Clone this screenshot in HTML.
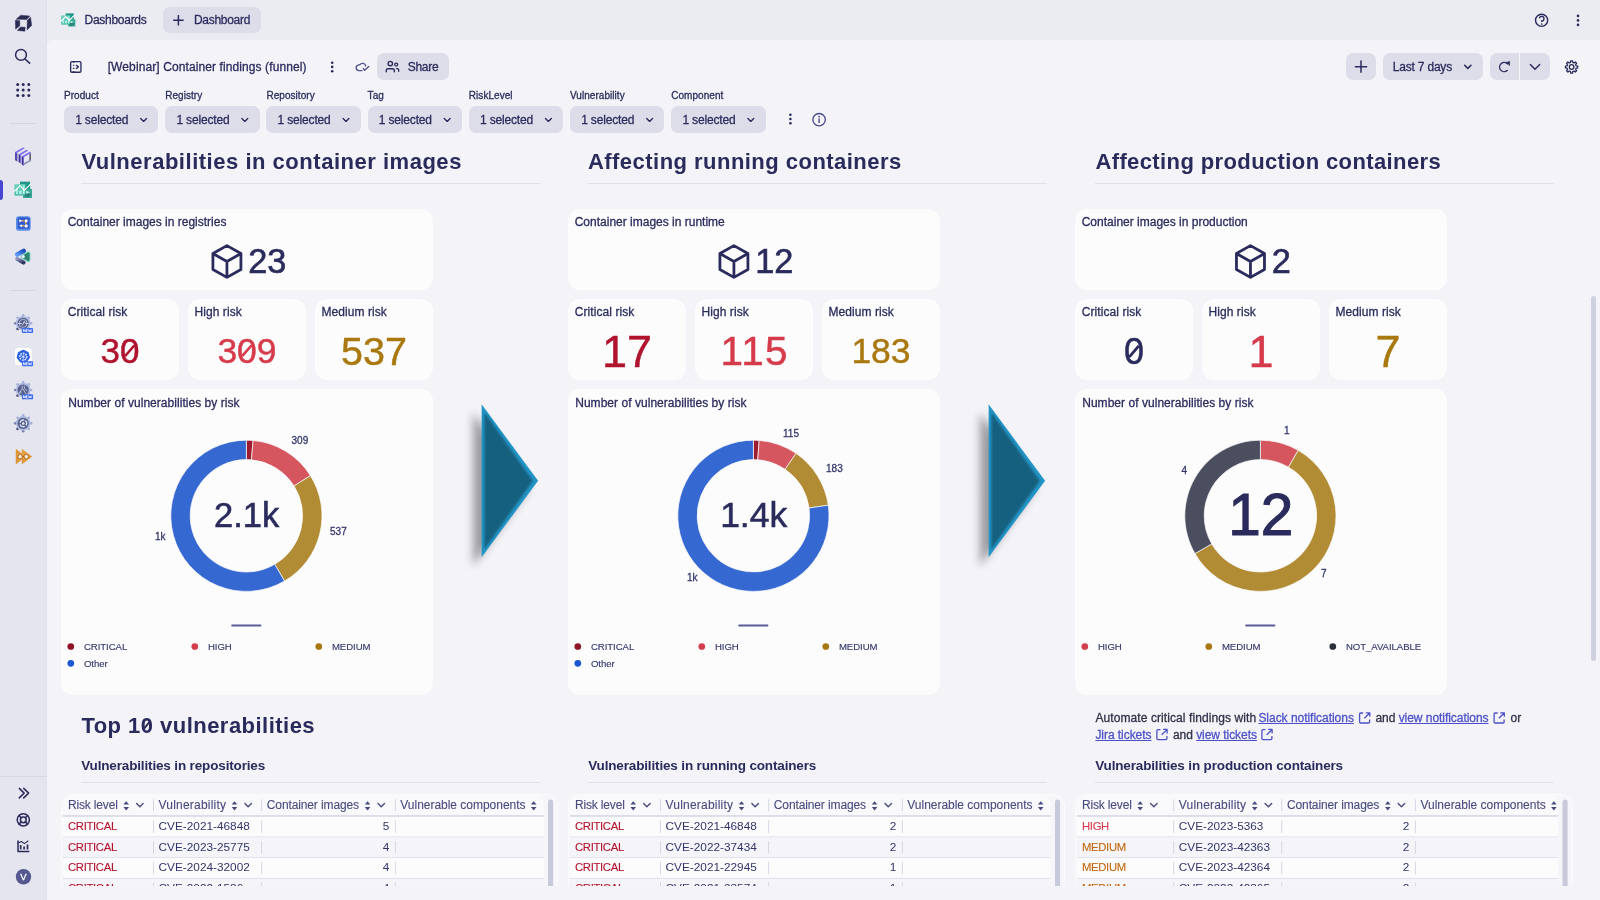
<!DOCTYPE html>
<html lang="en">
<head>
<meta charset="utf-8">
<title>Dashboards</title>
<style>
*{box-sizing:border-box;margin:0;padding:0}
html,body{width:1600px;height:900px;overflow:hidden}
body{font-family:"Liberation Sans",sans-serif;color:#2a2b5c;background:#f3f3f8;position:relative;font-size:12px}
.abs{position:absolute}
.t{position:absolute;white-space:nowrap;line-height:1;-webkit-text-stroke:0.28px currentColor}
#side{position:absolute;left:0;top:0;width:47px;height:900px;background:#e4e5ef;border-right:1px solid #dfe0ea}
#top{position:absolute;left:47px;top:0;width:1553px;height:47px;background:#ebecf2}
#main{position:absolute;left:47px;top:40px;width:1553px;height:860px;background:#f3f3f8;border-top-left-radius:5px}
.btn{position:absolute;background:#dcdde9;border-radius:7px}
.card{position:absolute;background:#fcfcfd;border-radius:12px}
.hr{position:absolute;height:1px;background:#dfe0ea}
svg{position:absolute;overflow:visible}
</style>
</head>
<body>
<div id="wrap" style="position:absolute;left:0;top:0;width:1600px;height:900px;overflow:hidden;will-change:transform">
<div id="side"></div>
<div id="top"></div>
<div id="main"></div>
<div class="abs" style="left:10px;top:123px;width:26px;height:1px;background:#d3d5e3"></div>
<div class="abs" style="left:10px;top:290px;width:26px;height:1px;background:#d3d5e3"></div>
<div class="abs" style="left:0px;top:776px;width:47px;height:1px;background:#d6d8e5"></div>
<div class="abs" style="left:0px;top:180px;width:3px;height:20px;background:#4646d2;border-radius:0 3px 3px 0"></div>
<svg style="left:10px;top:10px" width="28" height="28" viewBox="0 0 900 900"><g fill="#2a2b52" stroke="#2a2b52" stroke-width="14" stroke-linejoin="round"><path d="M345 165 L635 192 L535 305 L195 300 Z"/><path d="M662 232 L697 498 L545 645 L558 322 Z"/><path d="M170 332 L315 342 L315 505 L180 615 Z"/><path d="M335 545 L488 552 L478 685 L235 658 Z"/></g></svg>
<svg style="left:0px;top:0px" width="47" height="110" viewBox="0 0 47 110"><circle cx="21" cy="54.9" r="5.4" fill="none" stroke="#2a2b5c" stroke-width="1.5"/><path d="M25 59 L29.6 63.2" stroke="#2a2b5c" stroke-width="1.6" stroke-linecap="round"/><circle cx="17.7" cy="84.6" r="1.5" fill="#2a2b5c"/><circle cx="17.7" cy="90.0" r="1.5" fill="#2a2b5c"/><circle cx="17.7" cy="95.4" r="1.5" fill="#2a2b5c"/><circle cx="23.2" cy="84.6" r="1.5" fill="#2a2b5c"/><circle cx="23.2" cy="90.0" r="1.5" fill="#2a2b5c"/><circle cx="23.2" cy="95.4" r="1.5" fill="#2a2b5c"/><circle cx="28.8" cy="84.6" r="1.5" fill="#2a2b5c"/><circle cx="28.8" cy="90.0" r="1.5" fill="#2a2b5c"/><circle cx="28.8" cy="95.4" r="1.5" fill="#2a2b5c"/></svg>
<svg style="left:8px;top:142px" width="30" height="30" viewBox="0 0 900 900"><path d="M265 330 L325 365 L325 610 L265 580Z M375 395 L420 425 L420 685 L375 640Z" fill="#aaa5d9"/>
<path d="M215 300 L450 165 L500 190 L265 330Z M325 365 L555 235 L600 260 L375 395Z M420 425 L650 290 L695 320 L470 455Z" fill="#7c69f6"/>
<path d="M215 300 L265 330 L265 580 L215 550Z M325 365 L375 395 L375 640 L325 610Z M420 425 L470 455 L470 715 L420 685Z" fill="#3b2e9e"/>
<path d="M640 358 L690 330 L690 570 L640 545Z" fill="#5d6079"/><path d="M470 640 L640 545 L690 570 L470 700Z" fill="#8a93b5"/></svg>
<svg style="left:8px;top:175px" width="30" height="30" viewBox="0 0 900 900"><defs><linearGradient id="gd1" x1="0" y1="0" x2="0" y2="1"><stop offset="0" stop-color="#6fd2c2"/><stop offset="1" stop-color="#52bdab"/></linearGradient></defs>
<rect x="360" y="200" width="305" height="240" fill="#1f9787"/>
<rect x="450" y="420" width="270" height="270" fill="#37a898"/>
<rect x="190" y="275" width="330" height="345" fill="url(#gd1)"/>
<g fill="#aef1e5"><rect x="240" y="400" width="55" height="170"/><rect x="335" y="470" width="75" height="100"/><rect x="445" y="310" width="55" height="260"/></g>
<path d="M545 470 L660 520 L545 560Z" fill="#c8f5ec"/><path d="M480 600 A110 110 0 0 0 690 560 L545 560Z" fill="#2b8577"/>
<path d="M185 500 L360 322 L490 462 L692 262" fill="none" stroke="#ffffff" stroke-width="32"/></svg>
<svg style="left:8px;top:208px" width="30" height="30" viewBox="0 0 900 900"><rect x="240" y="245" width="440" height="440" rx="85" fill="#5b8ee9"/><rect x="290" y="285" width="355" height="340" rx="50" fill="#3157c9"/>
<g fill="#e0a040"><rect x="425" y="365" width="70" height="40"/><rect x="510" y="420" width="40" height="70"/><rect x="420" y="510" width="70" height="40"/></g>
<g fill="#f4f7ff"><path d="M340 335 L435 385 L340 435Z"/><circle cx="545" cy="385" r="48"/><path d="M330 532 L425 485 L425 580Z"/><circle cx="545" cy="540" r="52"/></g></svg>
<svg style="left:8px;top:241px" width="30" height="30" viewBox="0 0 900 900"><defs><linearGradient id="g4a" x1="0" y1="1" x2="1" y2="0"><stop offset="0" stop-color="#5b95f5"/><stop offset="1" stop-color="#1d4fc0"/></linearGradient>
<linearGradient id="g4b" x1="0" y1="0" x2="1" y2="1"><stop offset="0" stop-color="#8b96bd"/><stop offset="1" stop-color="#2e3360"/></linearGradient></defs>
<path d="M278 405 L470 298" stroke="url(#g4a)" stroke-width="135" stroke-linecap="round"/>
<path d="M278 540 L465 645" stroke="url(#g4b)" stroke-width="125" stroke-linecap="round"/>
<path d="M445 470 L610 380 L610 565 Z" fill="#6fcfb9" stroke="#6fcfb9" stroke-width="125" stroke-linejoin="round"/>
<path d="M445 470 L610 380 L610 565 Z" fill="#2f8272" stroke="#2f8272" stroke-width="70" stroke-linejoin="round"/>
<circle cx="458" cy="466" r="47" fill="#eef0ff"/></svg>
<svg style="left:8px;top:308px" width="30" height="30" viewBox="0 0 900 900"><circle cx="455" cy="222" r="40" fill="#a7b2dc"/><circle cx="623" cy="292" r="40" fill="#a7b2dc"/><circle cx="693" cy="460" r="40" fill="#a7b2dc"/><circle cx="623" cy="628" r="40" fill="#a7b2dc"/><circle cx="455" cy="698" r="40" fill="#7580ad"/><circle cx="287" cy="628" r="40" fill="#4a5078"/><circle cx="217" cy="460" r="40" fill="#7580ad"/><circle cx="287" cy="292" r="40" fill="#a7b2dc"/><circle cx="455" cy="460" r="218" fill="#aeb9e0"/><circle cx="455" cy="460" r="168" fill="#57618b"/><circle cx="455" cy="460" r="120" fill="none" stroke="#c5cdea" stroke-width="22"/>
<path d="M300 465 L400 465 L440 505 L490 400 L530 470 L610 465" fill="none" stroke="#dfe5f8" stroke-width="26" stroke-linejoin="round"/><rect x="420" y="600" width="332" height="150" rx="26" fill="#3f6cf1"/>
<path d="M465 712 V642 L515 712 V642 M585 642 H545 V712 H585 M545 677 H580 M615 642 L635 712 L660 655 L685 712 L708 642" fill="none" stroke="#ffffff" stroke-width="22" stroke-linejoin="round"/></svg>
<svg style="left:8px;top:342px" width="30" height="30" viewBox="0 0 900 900"><rect x="205" y="180" width="510" height="520" rx="110" fill="#ffffff"/>
<path d="M460 240 L610 312 L648 475 L545 605 L375 605 L272 475 L310 312Z" fill="#2a5ee0" stroke="#2a5ee0" stroke-width="24" stroke-linejoin="round"/>
<circle cx="460" cy="440" r="105" fill="none" stroke="#e4ebff" stroke-width="42" stroke-dasharray="50 28"/>
<circle cx="460" cy="440" r="28" fill="#e4ebff"/><path d="M460 320 L460 560 M355 380 L565 500 M355 500 L565 380" stroke="#e4ebff" stroke-width="16"/><rect x="420" y="575" width="332" height="150" rx="26" fill="#3f6cf1"/>
<path d="M465 687 V617 L515 687 V617 M585 617 H545 V687 H585 M545 652 H580 M615 617 L635 687 L660 630 L685 687 L708 617" fill="none" stroke="#ffffff" stroke-width="22" stroke-linejoin="round"/></svg>
<svg style="left:8px;top:375px" width="30" height="30" viewBox="0 0 900 900"><circle cx="455" cy="212" r="40" fill="#a7b2dc"/><circle cx="623" cy="282" r="40" fill="#a7b2dc"/><circle cx="693" cy="450" r="40" fill="#a7b2dc"/><circle cx="623" cy="618" r="40" fill="#a7b2dc"/><circle cx="455" cy="688" r="40" fill="#7580ad"/><circle cx="287" cy="618" r="40" fill="#4a5078"/><circle cx="217" cy="450" r="40" fill="#7580ad"/><circle cx="287" cy="282" r="40" fill="#a7b2dc"/><circle cx="455" cy="450" r="218" fill="#aeb9e0"/><circle cx="455" cy="450" r="168" fill="#57618b"/><path d="M425 330 L425 420 L345 540 M490 330 L490 400 L565 470 M450 420 L535 560" fill="none" stroke="#c5cdea" stroke-width="26" stroke-linecap="round" stroke-linejoin="round"/>
<circle cx="372" cy="522" r="30" fill="none" stroke="#c5cdea" stroke-width="18"/><rect x="420" y="578" width="332" height="150" rx="26" fill="#3f6cf1"/>
<path d="M465 690 V620 L515 690 V620 M585 620 H545 V690 H585 M545 655 H580 M615 620 L635 690 L660 633 L685 690 L708 620" fill="none" stroke="#ffffff" stroke-width="22" stroke-linejoin="round"/></svg>
<svg style="left:8px;top:408px" width="30" height="30" viewBox="0 0 900 900"><circle cx="455" cy="222" r="40" fill="#a7b2dc"/><circle cx="623" cy="292" r="40" fill="#a7b2dc"/><circle cx="693" cy="460" r="40" fill="#a7b2dc"/><circle cx="623" cy="628" r="40" fill="#a7b2dc"/><circle cx="455" cy="698" r="40" fill="#7580ad"/><circle cx="287" cy="628" r="40" fill="#4a5078"/><circle cx="217" cy="460" r="40" fill="#7580ad"/><circle cx="287" cy="292" r="40" fill="#a7b2dc"/><circle cx="455" cy="460" r="218" fill="#aeb9e0"/><circle cx="455" cy="460" r="168" fill="#57618b"/><circle cx="458" cy="462" r="100" fill="none" stroke="#dfe5f8" stroke-width="40" stroke-dasharray="165 45" transform="rotate(-60 458 462)"/><circle cx="458" cy="462" r="38" fill="#eef1ff"/></svg>
<svg style="left:8px;top:442px" width="30" height="30" viewBox="0 0 900 900"><defs><linearGradient id="g9" x1="0" y1="0" x2="1" y2="1"><stop offset="0" stop-color="#e9a441"/><stop offset="1" stop-color="#d38a25"/></linearGradient></defs>
<path d="M240 215 L530 437 L240 660Z" fill="#dc9535" stroke="#dc9535" stroke-width="14" stroke-linejoin="round"/>
<path d="M420 215 L715 437 L420 660Z" fill="url(#g9)" stroke="#e29c3a" stroke-width="14" stroke-linejoin="round"/>
<circle cx="365" cy="440" r="62" fill="#f6f1dc" stroke="#9a4f1c" stroke-width="18"/><circle cx="548" cy="437" r="62" fill="#f6f1dc" stroke="#9a4f1c" stroke-width="18"/><rect x="425" y="418" width="60" height="36" fill="#b5601f"/></svg>
<svg style="left:0px;top:780px" width="47" height="120" viewBox="0 0 47 120"><g fill="none" stroke="#2a2b5c" stroke-width="1.5" stroke-linecap="round" stroke-linejoin="round">
<path d="M19.3 8.4 L24.1 13.1 L19.3 17.9 M23.7 8.4 L28.6 13.1 L23.7 17.9"/>
<circle cx="23.3" cy="39.8" r="6.1"/><circle cx="23.3" cy="39.8" r="2.9"/>
<path d="M19 35.5 L21.2 37.7 M27.6 35.5 L25.4 37.7 M19 44.1 L21.2 41.9 M27.6 44.1 L25.4 41.9"/>
<path d="M18 61 L18 71.6 L28.8 71.6"/><path d="M18.2 63 L21.3 61.5 L24.4 63.6 L28 61" stroke-width="1.1"/></g>
<path d="M20.7 65 V69.5 M24.1 66.4 V69.5 M27.5 64.6 V69.5" stroke="#2a2b5c" stroke-width="1.7" fill="none"/>
<circle cx="23.5" cy="96.8" r="7.7" fill="#55588f"/></svg>
<div class="t" style="left:-176.50px;width:400px;text-align:center;top:872px;font-size:9.5px;color:#ffffff;">V</div>
<svg style="left:56.3px;top:7.7px" width="24.2" height="24.2" viewBox="0 0 900 900"><defs><linearGradient id="gd1b" x1="0" y1="0" x2="0" y2="1"><stop offset="0" stop-color="#6fd2c2"/><stop offset="1" stop-color="#52bdab"/></linearGradient></defs>
<rect x="360" y="200" width="305" height="240" fill="#1f9787"/>
<rect x="450" y="420" width="270" height="270" fill="#37a898"/>
<rect x="190" y="275" width="330" height="345" fill="url(#gd1b)"/>
<g fill="#aef1e5"><rect x="240" y="400" width="55" height="170"/><rect x="335" y="470" width="75" height="100"/><rect x="445" y="310" width="55" height="260"/></g>
<path d="M545 470 L660 520 L545 560Z" fill="#c8f5ec"/><path d="M480 600 A110 110 0 0 0 690 560 L545 560Z" fill="#2b8577"/>
<path d="M185 500 L360 322 L490 462 L692 262" fill="none" stroke="#ffffff" stroke-width="42"/></svg>
<div class="t" style="left:84.50px;top:14px;font-size:12px;letter-spacing:-0.27px;">Dashboards</div>
<div class="btn" style="left:163px;top:7px;width:98px;height:26px;border-radius:7px"></div>
<div class="t" style="left:194.00px;top:14px;font-size:12px;letter-spacing:-0.3px;">Dashboard</div>
<svg style="left:0px;top:0px" width="1600" height="40" viewBox="0 0 1600 40"><path d="M173.2 20.2 H183.6 M178.4 15 V25.4" stroke="#2a2b5c" stroke-width="1.5" fill="none"/>
<circle cx="1541.6" cy="20.3" r="6.1" fill="none" stroke="#2a2b5c" stroke-width="1.4"/>
<path d="M1539.4 18.4 A2.3 2.3 0 1 1 1541.7 20.9 V22.1" fill="none" stroke="#2a2b5c" stroke-width="1.3"/><circle cx="1541.7" cy="24" r="0.85" fill="#2a2b5c"/>
<circle cx="1578" cy="15.9" r="1.3" fill="#2a2b5c"/><circle cx="1578" cy="20.4" r="1.3" fill="#2a2b5c"/><circle cx="1578" cy="24.9" r="1.3" fill="#2a2b5c"/></svg>
<div class="t" style="left:107.70px;top:61px;font-size:12px;letter-spacing:0.1px;">[Webinar] Container findings (funnel)</div>
<div class="btn" style="left:377px;top:53px;width:71.5px;height:26.7px;"></div>
<div class="t" style="left:407.80px;top:61px;font-size:12px;letter-spacing:-0.3px;">Share</div>
<div class="btn" style="left:1346px;top:53px;width:30px;height:26.7px;"></div>
<div class="btn" style="left:1383px;top:53px;width:100px;height:26.7px;"></div>
<div class="t" style="left:1392.80px;top:61px;font-size:12px;letter-spacing:-0.2px;">Last 7 days</div>
<div class="btn" style="left:1489.5px;top:53px;width:29.7px;height:26.7px;border-radius:7px 0 0 7px"></div>
<div class="btn" style="left:1520.2px;top:53px;width:29.8px;height:26.7px;border-radius:0 7px 7px 0"></div>
<svg style="left:0px;top:40px" width="1600" height="60" viewBox="0 0 1600 60"><g fill="none" stroke="#2a2b5c" stroke-width="1.4" stroke-linecap="round" stroke-linejoin="round" transform="translate(0,-40)">
<rect x="70.65" y="61.65" width="10.3" height="10.55" rx="1.2" stroke-width="1.35"/><path d="M73.65 61.6 V72.2" stroke-dasharray="1.1 2" stroke-linecap="butt" stroke-width="1.5"/><path d="M76.4 65.3 L78.4 66.9 L76.4 68.5" stroke-width="1.35"/>
<g stroke="#4f5190" stroke-width="1.35"><path d="M362 70.55 H358.8 A2.75 2.75 0 0 1 358.2 65.15 Q359 64.55 359.9 64.7 A3.3 3.3 0 0 1 365.7 65.8"/><path d="M363.3 68.5 L364.7 70.3 L368.7 66.5"/></g>
<circle cx="390.3" cy="63.6" r="2.2"/><path d="M386.3 71.8 V70.3 A1.6 1.6 0 0 1 387.9 68.7 H392.7 A1.6 1.6 0 0 1 394.3 70.3 V71.8"/>
<circle cx="396.2" cy="64.6" r="1.5" stroke-width="1.3"/><path d="M396.6 68.7 H397.3 A1.4 1.4 0 0 1 398.7 70.1 V71.3" stroke-width="1.3"/>
<path d="M1355.4 66.7 H1366.6 M1361 61.1 V72.3" stroke-width="1.5"/>
<path d="M1464.6 65.2 L1467.8 68.4 L1471 65.2" stroke-width="1.5"/>
<path d="M1507.45 63.75 A4.6 4.6 0 1 0 1507.2 70.5" stroke-width="1.4"/><path d="M1506.2 62.4 L1509.6 61.4 V65.2Z" fill="#2a2b5c" stroke-width="0.6"/>
<path d="M1530.4 64.6 L1535 69.2 L1539.7 64.6" stroke-width="1.4"/>
</g></svg>
<svg style="left:0px;top:0px" width="1600" height="100" viewBox="0 0 1600 100"><path d="M1570.50 62.43 L1570.68 60.87 L1572.52 60.87 L1572.70 62.43 L1574.06 62.99 L1575.28 62.01 L1576.59 63.32 L1575.61 64.54 L1576.17 65.90 L1577.73 66.08 L1577.73 67.92 L1576.17 68.10 L1575.61 69.46 L1576.59 70.68 L1575.28 71.99 L1574.06 71.01 L1572.70 71.57 L1572.52 73.13 L1570.68 73.13 L1570.50 71.57 L1569.14 71.01 L1567.92 71.99 L1566.61 70.68 L1567.59 69.46 L1567.03 68.10 L1565.47 67.92 L1565.47 66.08 L1567.03 65.90 L1567.59 64.54 L1566.61 63.32 L1567.92 62.01 L1569.14 62.99Z" fill="none" stroke="#2a2b5c" stroke-width="1.3" stroke-linejoin="round"/><circle cx="1571.6" cy="67" r="2.3" fill="none" stroke="#2a2b5c" stroke-width="1.3"/></svg>
<svg style="left:0px;top:0px" width="1600" height="100" viewBox="0 0 1600 100"><circle cx="332.2" cy="62.7" r="1.3" fill="#2a2b5c"/><circle cx="332.2" cy="66.9" r="1.3" fill="#2a2b5c"/><circle cx="332.2" cy="71.2" r="1.3" fill="#2a2b5c"/></svg>
<div class="t" style="left:64.00px;top:91px;font-size:10px;letter-spacing:0.05px;">Product</div>
<div class="btn" style="left:64.0px;top:106px;width:94.4px;height:26.5px;"></div>
<div class="t" style="left:75.20px;top:114px;font-size:12px;letter-spacing:-0.17px;">1 selected</div>
<div class="t" style="left:165.20px;top:91px;font-size:10px;letter-spacing:0.05px;">Registry</div>
<div class="btn" style="left:165.2px;top:106px;width:94.4px;height:26.5px;"></div>
<div class="t" style="left:176.40px;top:114px;font-size:12px;letter-spacing:-0.17px;">1 selected</div>
<div class="t" style="left:266.40px;top:91px;font-size:10px;letter-spacing:0.05px;">Repository</div>
<div class="btn" style="left:266.4px;top:106px;width:94.4px;height:26.5px;"></div>
<div class="t" style="left:277.60px;top:114px;font-size:12px;letter-spacing:-0.17px;">1 selected</div>
<div class="t" style="left:367.60px;top:91px;font-size:10px;letter-spacing:0.05px;">Tag</div>
<div class="btn" style="left:367.6px;top:106px;width:94.4px;height:26.5px;"></div>
<div class="t" style="left:378.80px;top:114px;font-size:12px;letter-spacing:-0.17px;">1 selected</div>
<div class="t" style="left:468.80px;top:91px;font-size:10px;letter-spacing:0.05px;">RiskLevel</div>
<div class="btn" style="left:468.8px;top:106px;width:94.4px;height:26.5px;"></div>
<div class="t" style="left:480.00px;top:114px;font-size:12px;letter-spacing:-0.17px;">1 selected</div>
<div class="t" style="left:570.00px;top:91px;font-size:10px;letter-spacing:0.05px;">Vulnerability</div>
<div class="btn" style="left:570.0px;top:106px;width:94.4px;height:26.5px;"></div>
<div class="t" style="left:581.20px;top:114px;font-size:12px;letter-spacing:-0.17px;">1 selected</div>
<div class="t" style="left:671.20px;top:91px;font-size:10px;letter-spacing:0.05px;">Component</div>
<div class="btn" style="left:671.2px;top:106px;width:94.4px;height:26.5px;"></div>
<div class="t" style="left:682.40px;top:114px;font-size:12px;letter-spacing:-0.17px;">1 selected</div>
<svg style="left:0px;top:0px" width="1600" height="140" viewBox="0 0 1600 140"><g fill="none" stroke="#2a2b5c" stroke-width="1.35" stroke-linecap="round" stroke-linejoin="round"><path d="M140.7 118.5 L143.6 121.4 L146.5 118.5"/><path d="M241.9 118.5 L244.8 121.4 L247.7 118.5"/><path d="M343.1 118.5 L346.0 121.4 L348.9 118.5"/><path d="M444.3 118.5 L447.2 121.4 L450.1 118.5"/><path d="M545.5 118.5 L548.4 121.4 L551.3 118.5"/><path d="M646.7 118.5 L649.6 121.4 L652.5 118.5"/><path d="M747.9 118.5 L750.8 121.4 L753.7 118.5"/></g><circle cx="790.4" cy="114.8" r="1.3" fill="#2a2b5c"/><circle cx="790.4" cy="119.0" r="1.3" fill="#2a2b5c"/><circle cx="790.4" cy="123.2" r="1.3" fill="#2a2b5c"/><circle cx="819.1" cy="119.7" r="6.2" fill="none" stroke="#47498a" stroke-width="1.3"/><path d="M819.1 118.6 V122.9" stroke="#47498a" stroke-width="1.4"/><circle cx="819.1" cy="116.6" r="0.9" fill="#47498a"/></svg>
<div class="t" style="left:81.40px;top:151px;font-size:22px;font-weight:bold;letter-spacing:0.52px;-webkit-text-stroke:0;">Vulnerabilities in container images</div>
<div class="hr" style="left:81.0px;top:183px;width:459px;height:1px;"></div>
<div class="t" style="left:587.90px;top:151px;font-size:22px;font-weight:bold;letter-spacing:0.47px;-webkit-text-stroke:0;">Affecting running containers</div>
<div class="hr" style="left:588.0px;top:183px;width:459px;height:1px;"></div>
<div class="t" style="left:1095.40px;top:151px;font-size:22px;font-weight:bold;letter-spacing:0.39px;-webkit-text-stroke:0;">Affecting production containers</div>
<div class="hr" style="left:1095.0px;top:183px;width:459px;height:1px;"></div>
<div class="card" style="left:61px;top:209px;width:372px;height:81px;"></div>
<div class="t" style="left:67.70px;top:216px;font-size:12px;">Container images in registries</div>
<div class="card" style="left:61px;top:299px;width:118px;height:81px;"></div>
<div class="card" style="left:188px;top:299px;width:118px;height:81px;"></div>
<div class="card" style="left:315px;top:299px;width:118px;height:81px;"></div>
<div class="t" style="left:67.70px;top:306px;font-size:12px;letter-spacing:0.08px;">Critical risk</div>
<div class="t" style="left:-80.00px;width:400px;text-align:center;top:333px;font-size:35px;color:#b0132d;-webkit-text-stroke:0.45px #b0132d;">30</div>
<svg style="left:0px;top:0px" width="1600" height="900" viewBox="0 0 1600 900"><path d="M125.18 356.00 L134.28 345.50" stroke="#b0132d" stroke-width="2.62"/></svg>
<div class="t" style="left:194.40px;top:306px;font-size:12px;letter-spacing:0.08px;">High risk</div>
<div class="t" style="left:47.00px;width:400px;text-align:center;top:334px;font-size:35.5px;color:#d63b4b;-webkit-text-stroke:0.45px #d63b4b;">309</div>
<svg style="left:0px;top:0px" width="1600" height="900" viewBox="0 0 1600 900"><path d="M242.38 355.90 L251.62 345.25" stroke="#d63b4b" stroke-width="2.66"/></svg>
<div class="t" style="left:321.40px;top:306px;font-size:12px;letter-spacing:0.08px;">Medium risk</div>
<div class="t" style="left:174.00px;width:400px;text-align:center;top:332px;font-size:39.5px;color:#a9780f;-webkit-text-stroke:0.45px #a9780f;">537</div>
<div class="card" style="left:61px;top:389px;width:372px;height:306px;"></div>
<div class="t" style="left:68.20px;top:397px;font-size:12px;letter-spacing:0.04px;">Number of vulnerabilities by risk</div>
<svg style="left:0px;top:0px" width="1600" height="900" viewBox="0 0 1600 900"><path d="M226.92 245.60 L240.92 253.55 L240.92 269.45 L226.92 277.40 L212.92 269.45 L212.92 253.55Z M212.92 253.55 L226.92 261.50 L240.92 253.55 M226.92 261.50 V277.40" fill="none" stroke="#2a2b5c" stroke-width="2.8" stroke-linejoin="round"/></svg>
<div class="t" style="left:248.22px;top:244px;font-size:34.3px;-webkit-text-stroke:0.6px #2a2b5c;">23</div>
<svg style="left:0px;top:0px" width="1600" height="900" viewBox="0 0 1600 900"><path d="M246.40 440.20 A75.6 75.6 0 0 1 253.12 440.50 L251.40 459.82 A56.2 56.2 0 0 0 246.40 459.60Z" fill="#9e1c30" stroke="#fcfcfd" stroke-width="0.7"/><path d="M253.12 440.50 A75.6 75.6 0 0 1 310.44 475.63 L294.01 485.94 A56.2 56.2 0 0 0 251.40 459.82Z" fill="#d5565f" stroke="#fcfcfd" stroke-width="0.7"/><path d="M310.44 475.63 A75.6 75.6 0 0 1 284.54 581.07 L274.75 564.32 A56.2 56.2 0 0 0 294.01 485.94Z" fill="#b28c34" stroke="#fcfcfd" stroke-width="0.7"/><path d="M284.54 581.07 A75.6 75.6 0 1 1 246.40 440.20 L246.40 459.60 A56.2 56.2 0 1 0 274.75 564.32Z" fill="#3668d1" stroke="#fcfcfd" stroke-width="0.7"/><rect x="231.2" y="624.6" width="30.2" height="1.8" rx="0.9" fill="#5a5c98"/><circle cx="70.8" cy="646.5" r="3.35" fill="#8f1426"/><circle cx="194.8" cy="646.5" r="3.35" fill="#d33e4c"/><circle cx="318.8" cy="646.5" r="3.35" fill="#a8770f"/><circle cx="70.8" cy="663.3" r="3.35" fill="#1b57d1"/></svg>
<div class="t" style="left:83.90px;top:642px;font-size:9.6px;color:#33356a;letter-spacing:-0.05px;-webkit-text-stroke:0.12px #33356a;">CRITICAL</div>
<div class="t" style="left:207.90px;top:642px;font-size:9.6px;color:#33356a;letter-spacing:-0.05px;-webkit-text-stroke:0.12px #33356a;">HIGH</div>
<div class="t" style="left:331.90px;top:642px;font-size:9.6px;color:#33356a;letter-spacing:-0.05px;-webkit-text-stroke:0.12px #33356a;">MEDIUM</div>
<div class="t" style="left:83.90px;top:659px;font-size:9.6px;color:#33356a;letter-spacing:-0.05px;-webkit-text-stroke:0.12px #33356a;">Other</div>
<div class="t" style="left:291.50px;top:436px;font-size:10px;color:#33356a;letter-spacing:0.05px;">309</div>
<div class="t" style="left:330.00px;top:527px;font-size:10px;color:#33356a;letter-spacing:0.05px;">537</div>
<div class="t" style="left:155.00px;top:532px;font-size:10px;color:#33356a;letter-spacing:0.05px;">1k</div>
<div class="t" style="left:46.70px;width:400px;text-align:center;top:498px;font-size:34.5px;-webkit-text-stroke:0.55px #2a2b5c;">2.1k</div>
<div class="card" style="left:568px;top:209px;width:372px;height:81px;"></div>
<div class="t" style="left:574.70px;top:216px;font-size:12px;">Container images in runtime</div>
<div class="card" style="left:568px;top:299px;width:118px;height:81px;"></div>
<div class="card" style="left:695px;top:299px;width:118px;height:81px;"></div>
<div class="card" style="left:822px;top:299px;width:118px;height:81px;"></div>
<div class="t" style="left:574.70px;top:306px;font-size:12px;letter-spacing:0.08px;">Critical risk</div>
<div class="t" style="left:427.00px;width:400px;text-align:center;top:329px;font-size:45px;color:#b0132d;-webkit-text-stroke:0.45px #b0132d;">17</div>
<div class="t" style="left:701.40px;top:306px;font-size:12px;letter-spacing:0.08px;">High risk</div>
<div class="t" style="left:554.65px;width:400px;text-align:center;top:331px;font-size:40.5px;color:#d63b4b;letter-spacing:1.3px;-webkit-text-stroke:0.45px #d63b4b;">115</div>
<div class="t" style="left:828.40px;top:306px;font-size:12px;letter-spacing:0.08px;">Medium risk</div>
<div class="t" style="left:681.00px;width:400px;text-align:center;top:334px;font-size:35.5px;color:#a9780f;-webkit-text-stroke:0.45px #a9780f;">183</div>
<div class="card" style="left:568px;top:389px;width:372px;height:306px;"></div>
<div class="t" style="left:575.20px;top:397px;font-size:12px;letter-spacing:0.04px;">Number of vulnerabilities by risk</div>
<svg style="left:0px;top:0px" width="1600" height="900" viewBox="0 0 1600 900"><path d="M733.92 245.60 L747.92 253.55 L747.92 269.45 L733.92 277.40 L719.92 269.45 L719.92 253.55Z M719.92 253.55 L733.92 261.50 L747.92 253.55 M733.92 261.50 V277.40" fill="none" stroke="#2a2b5c" stroke-width="2.8" stroke-linejoin="round"/></svg>
<div class="t" style="left:755.22px;top:244px;font-size:34.3px;-webkit-text-stroke:0.6px #2a2b5c;">12</div>
<svg style="left:0px;top:0px" width="1600" height="900" viewBox="0 0 1600 900"><path d="M753.40 440.20 A75.6 75.6 0 0 1 759.20 440.42 L757.71 459.77 A56.2 56.2 0 0 0 753.40 459.60Z" fill="#9e1c30" stroke="#fcfcfd" stroke-width="0.7"/><path d="M759.20 440.42 A75.6 75.6 0 0 1 796.00 453.35 L785.07 469.37 A56.2 56.2 0 0 0 757.71 459.77Z" fill="#d5565f" stroke="#fcfcfd" stroke-width="0.7"/><path d="M796.00 453.35 A75.6 75.6 0 0 1 828.26 505.28 L809.05 507.98 A56.2 56.2 0 0 0 785.07 469.37Z" fill="#b28c34" stroke="#fcfcfd" stroke-width="0.7"/><path d="M828.26 505.28 A75.6 75.6 0 1 1 753.40 440.20 L753.40 459.60 A56.2 56.2 0 1 0 809.05 507.98Z" fill="#3668d1" stroke="#fcfcfd" stroke-width="0.7"/><rect x="738.2" y="624.6" width="30.2" height="1.8" rx="0.9" fill="#5a5c98"/><circle cx="577.8" cy="646.5" r="3.35" fill="#8f1426"/><circle cx="701.8" cy="646.5" r="3.35" fill="#d33e4c"/><circle cx="825.8" cy="646.5" r="3.35" fill="#a8770f"/><circle cx="577.8" cy="663.3" r="3.35" fill="#1b57d1"/></svg>
<div class="t" style="left:590.90px;top:642px;font-size:9.6px;color:#33356a;letter-spacing:-0.05px;-webkit-text-stroke:0.12px #33356a;">CRITICAL</div>
<div class="t" style="left:714.90px;top:642px;font-size:9.6px;color:#33356a;letter-spacing:-0.05px;-webkit-text-stroke:0.12px #33356a;">HIGH</div>
<div class="t" style="left:838.90px;top:642px;font-size:9.6px;color:#33356a;letter-spacing:-0.05px;-webkit-text-stroke:0.12px #33356a;">MEDIUM</div>
<div class="t" style="left:590.90px;top:659px;font-size:9.6px;color:#33356a;letter-spacing:-0.05px;-webkit-text-stroke:0.12px #33356a;">Other</div>
<div class="t" style="left:783.00px;top:429px;font-size:10px;color:#33356a;letter-spacing:0.05px;">115</div>
<div class="t" style="left:826.00px;top:464px;font-size:10px;color:#33356a;letter-spacing:0.05px;">183</div>
<div class="t" style="left:687.00px;top:573px;font-size:10px;color:#33356a;letter-spacing:0.05px;">1k</div>
<div class="t" style="left:553.70px;width:400px;text-align:center;top:498px;font-size:35.5px;-webkit-text-stroke:0.55px #2a2b5c;">1.4k</div>
<div class="card" style="left:1075px;top:209px;width:372px;height:81px;"></div>
<div class="t" style="left:1081.70px;top:216px;font-size:12px;">Container images in production</div>
<div class="card" style="left:1075px;top:299px;width:118px;height:81px;"></div>
<div class="card" style="left:1202px;top:299px;width:118px;height:81px;"></div>
<div class="card" style="left:1329px;top:299px;width:118px;height:81px;"></div>
<div class="t" style="left:1081.70px;top:306px;font-size:12px;letter-spacing:0.08px;">Critical risk</div>
<div class="t" style="left:934.00px;width:400px;text-align:center;top:334px;font-size:36px;color:#2a2b5c;-webkit-text-stroke:0.45px #2a2b5c;">0</div>
<svg style="left:0px;top:0px" width="1600" height="900" viewBox="0 0 1600 900"><path d="M1129.32 356.80 L1138.68 346.00" stroke="#2a2b5c" stroke-width="2.70"/></svg>
<div class="t" style="left:1208.40px;top:306px;font-size:12px;letter-spacing:0.08px;">High risk</div>
<div class="t" style="left:1061.00px;width:400px;text-align:center;top:329px;font-size:45px;color:#d63b4b;-webkit-text-stroke:0.45px #d63b4b;">1</div>
<div class="t" style="left:1335.40px;top:306px;font-size:12px;letter-spacing:0.08px;">Medium risk</div>
<div class="t" style="left:1188.00px;width:400px;text-align:center;top:329px;font-size:45px;color:#a9780f;-webkit-text-stroke:0.45px #a9780f;">7</div>
<div class="card" style="left:1075px;top:389px;width:372px;height:306px;"></div>
<div class="t" style="left:1082.20px;top:397px;font-size:12px;letter-spacing:0.04px;">Number of vulnerabilities by risk</div>
<svg style="left:0px;top:0px" width="1600" height="900" viewBox="0 0 1600 900"><path d="M1250.46 245.60 L1264.46 253.55 L1264.46 269.45 L1250.46 277.40 L1236.46 269.45 L1236.46 253.55Z M1236.46 253.55 L1250.46 261.50 L1264.46 253.55 M1250.46 261.50 V277.40" fill="none" stroke="#2a2b5c" stroke-width="2.8" stroke-linejoin="round"/></svg>
<div class="t" style="left:1271.76px;top:244px;font-size:34.3px;-webkit-text-stroke:0.6px #2a2b5c;">2</div>
<svg style="left:0px;top:0px" width="1600" height="900" viewBox="0 0 1600 900"><path d="M1260.40 440.20 A75.6 75.6 0 0 1 1298.20 450.33 L1288.50 467.13 A56.2 56.2 0 0 0 1260.40 459.60Z" fill="#d5565f" stroke="#fcfcfd" stroke-width="0.7"/><path d="M1298.20 450.33 A75.6 75.6 0 1 1 1194.93 553.60 L1211.73 543.90 A56.2 56.2 0 1 0 1288.50 467.13Z" fill="#b28c34" stroke="#fcfcfd" stroke-width="0.7"/><path d="M1194.93 553.60 A75.6 75.6 0 0 1 1260.40 440.20 L1260.40 459.60 A56.2 56.2 0 0 0 1211.73 543.90Z" fill="#4a4e5e" stroke="#fcfcfd" stroke-width="0.7"/><rect x="1245.2" y="624.6" width="30.2" height="1.8" rx="0.9" fill="#5a5c98"/><circle cx="1084.8" cy="646.5" r="3.35" fill="#d33e4c"/><circle cx="1208.8" cy="646.5" r="3.35" fill="#a8770f"/><circle cx="1332.8" cy="646.5" r="3.35" fill="#2b2e3b"/></svg>
<div class="t" style="left:1097.90px;top:642px;font-size:9.6px;color:#33356a;letter-spacing:-0.05px;-webkit-text-stroke:0.12px #33356a;">HIGH</div>
<div class="t" style="left:1221.90px;top:642px;font-size:9.6px;color:#33356a;letter-spacing:-0.05px;-webkit-text-stroke:0.12px #33356a;">MEDIUM</div>
<div class="t" style="left:1345.90px;top:642px;font-size:9.6px;color:#33356a;letter-spacing:-0.05px;-webkit-text-stroke:0.12px #33356a;">NOT_AVAILABLE</div>
<div class="t" style="left:1284.00px;top:426px;font-size:10px;color:#33356a;letter-spacing:0.05px;">1</div>
<div class="t" style="left:1181.50px;top:466px;font-size:10px;color:#33356a;letter-spacing:0.05px;">4</div>
<div class="t" style="left:1321.00px;top:569px;font-size:10px;color:#33356a;letter-spacing:0.05px;">7</div>
<div class="t" style="left:1060.70px;width:400px;text-align:center;top:486px;font-size:58.5px;-webkit-text-stroke:1.1px #2a2b5c;">12</div>
<svg style="left:0px;top:0px" width="1600" height="900" viewBox="0 0 1600 900"><defs><filter id="sh0" x="-50%" y="-20%" width="200%" height="140%"><feGaussianBlur stdDeviation="4.3"/></filter>
<filter id="bl0" x="-20%" y="-20%" width="140%" height="140%"><feGaussianBlur stdDeviation="1.3"/></filter>
<clipPath id="cp0"><path d="M481.6 404.3 L538.1 480.8 L481.6 557.3Z"/></clipPath></defs>
<path d="M473.1 413 L528.6 489 L473.1 566Z" fill="#6c6c72" opacity="0.66" filter="url(#sh0)"/>
<path d="M481.6 404.3 L538.1 480.8 L481.6 557.3Z" fill="#2395c6"/>
<g clip-path="url(#cp0)"><path d="M484.40000000000003 412.3 L532.9 480.8 L484.40000000000003 549.3Z" fill="#17607f" filter="url(#bl0)"/></g></svg>
<svg style="left:0px;top:0px" width="1600" height="900" viewBox="0 0 1600 900"><defs><filter id="sh1" x="-50%" y="-20%" width="200%" height="140%"><feGaussianBlur stdDeviation="4.3"/></filter>
<filter id="bl1" x="-20%" y="-20%" width="140%" height="140%"><feGaussianBlur stdDeviation="1.3"/></filter>
<clipPath id="cp1"><path d="M988.6 404.3 L1045.1 480.8 L988.6 557.3Z"/></clipPath></defs>
<path d="M980.1 413 L1035.6 489 L980.1 566Z" fill="#6c6c72" opacity="0.66" filter="url(#sh1)"/>
<path d="M988.6 404.3 L1045.1 480.8 L988.6 557.3Z" fill="#2395c6"/>
<g clip-path="url(#cp1)"><path d="M991.4 412.3 L1039.9 480.8 L991.4 549.3Z" fill="#17607f" filter="url(#bl1)"/></g></svg>
<div class="t" style="left:81.40px;top:715px;font-size:22px;font-weight:bold;letter-spacing:0.47px;-webkit-text-stroke:0;">Top 10 vulnerabilities</div>
<div class="t" style="left:81.20px;top:759px;font-size:13.5px;font-weight:bold;letter-spacing:-0.15px;-webkit-text-stroke:0;">Vulnerabilities in repositories</div>
<div class="hr" style="left:81.0px;top:782px;width:459px;height:1px;"></div>
<div class="t" style="left:588.20px;top:759px;font-size:13.5px;font-weight:bold;letter-spacing:-0.15px;-webkit-text-stroke:0;">Vulnerabilities in running containers</div>
<div class="hr" style="left:588.0px;top:782px;width:459px;height:1px;"></div>
<div class="t" style="left:1095.20px;top:759px;font-size:13.5px;font-weight:bold;letter-spacing:-0.15px;-webkit-text-stroke:0;">Vulnerabilities in production containers</div>
<div class="hr" style="left:1095.0px;top:782px;width:459px;height:1px;"></div>
<div class="t" style="left:1095.40px;top:712px;font-size:12px;color:#2f3046;letter-spacing:0.09px;">Automate critical findings with</div>
<div class="t" style="left:1258.40px;top:712px;font-size:12px;letter-spacing:-0.03px;"><span style="text-decoration:underline;text-decoration-thickness:1px;text-underline-offset:1.2px;color:#4d50c8">Slack notifications</span></div>
<div class="t" style="left:1375.50px;top:712px;font-size:12px;letter-spacing:-0.05px;"><span style="color:#2f3046">and</span> <span style="text-decoration:underline;text-decoration-thickness:1px;text-underline-offset:1.2px;color:#4d50c8">view notifications</span></div>
<div class="t" style="left:1510.50px;top:712px;font-size:12px;color:#2f3046;">or</div>
<div class="t" style="left:1095.40px;top:729px;font-size:12px;letter-spacing:-0.05px;"><span style="text-decoration:underline;text-decoration-thickness:1px;text-underline-offset:1.2px;color:#4d50c8">Jira tickets</span></div>
<div class="t" style="left:1173.00px;top:729px;font-size:12px;letter-spacing:-0.05px;"><span style="color:#2f3046">and</span> <span style="text-decoration:underline;text-decoration-thickness:1px;text-underline-offset:1.2px;color:#4d50c8">view tickets</span></div>
<svg style="left:0px;top:0px" width="1600" height="900" viewBox="0 0 1600 900"><path d="M144.30 728.40 L149.50 721.80" stroke="#2a2b5c" stroke-width="1.9"/><path d="M1363.2 713 H1360.6 A1 1 0 0 0 1359.6 714 V722 A1 1 0 0 0 1360.6 723 H1368.6 A1 1 0 0 0 1369.6 722 V719.4 M1365.8 712.8 H1369.8 V716.8 M1369.6 713 L1364.4 718.2" fill="none" stroke="#4d50c8" stroke-width="1.3" stroke-linejoin="round"/><path d="M1497.7 713 H1495.1 A1 1 0 0 0 1494.1 714 V722 A1 1 0 0 0 1495.1 723 H1503.1 A1 1 0 0 0 1504.1 722 V719.4 M1500.3 712.8 H1504.3 V716.8 M1504.1 713 L1498.9 718.2" fill="none" stroke="#4d50c8" stroke-width="1.3" stroke-linejoin="round"/><path d="M1160.5 729.6 H1157.8999999999999 A1 1 0 0 0 1156.8999999999999 730.6 V738.6 A1 1 0 0 0 1157.8999999999999 739.6 H1165.8999999999999 A1 1 0 0 0 1166.8999999999999 738.6 V736.0 M1163.1 729.4 H1167.1 V733.4 M1166.8999999999999 729.6 L1161.7 734.8000000000001" fill="none" stroke="#4d50c8" stroke-width="1.3" stroke-linejoin="round"/><path d="M1265.5 729.6 H1262.8999999999999 A1 1 0 0 0 1261.8999999999999 730.6 V738.6 A1 1 0 0 0 1262.8999999999999 739.6 H1270.8999999999999 A1 1 0 0 0 1271.8999999999999 738.6 V736.0 M1268.1 729.4 H1272.1 V733.4 M1271.8999999999999 729.6 L1266.7 734.8000000000001" fill="none" stroke="#4d50c8" stroke-width="1.3" stroke-linejoin="round"/></svg>
<div class="abs" style="left:61.3px;top:793.5px;width:497px;height:120px;border-radius:12px;background:#f5f5fa;border:1.6px solid #fbfbfd"></div>
<div class="abs" style="left:0;top:0;width:1600px;height:886.2px;overflow:hidden"><svg style="left:0;top:0" width="1600" height="900"><clipPath id="tc0"><rect x="62.699999999999996" y="794.6" width="481.3" height="100" rx="10"/></clipPath><g clip-path="url(#tc0)"><rect x="62.699999999999996" y="794.6" width="481.3" height="21" fill="#f9f9fc"/><rect x="62.699999999999996" y="816.7" width="481.3" height="20.8" fill="#fcfcfd"/><rect x="62.699999999999996" y="836.5" width="481.3" height="1.1" fill="#e0e1ec"/><rect x="62.699999999999996" y="837.5" width="481.3" height="20.6" fill="#f5f5f9"/><rect x="62.699999999999996" y="857.1" width="481.3" height="1.1" fill="#e0e1ec"/><rect x="62.699999999999996" y="858.1" width="481.3" height="20.8" fill="#fcfcfd"/><rect x="62.699999999999996" y="877.9" width="481.3" height="1.1" fill="#e0e1ec"/><rect x="62.699999999999996" y="878.9" width="481.3" height="20.7" fill="#f5f5f9"/><rect x="62.699999999999996" y="898.6" width="481.3" height="1.1" fill="#e0e1ec"/><rect x="62.699999999999996" y="815.1" width="481.3" height="1.7" fill="#d9dae7"/></g></svg><div class="t" style="left:68.00px;top:799px;font-size:12px;color:#484b7d;letter-spacing:-0.17px;-webkit-text-stroke:0.1px #484b7d;">Risk level</div>
<div class="t" style="left:158.60px;top:799px;font-size:12px;color:#484b7d;letter-spacing:0.2px;-webkit-text-stroke:0.1px #484b7d;">Vulnerability</div>
<div class="t" style="left:266.80px;top:799px;font-size:12px;color:#484b7d;letter-spacing:-0.12px;-webkit-text-stroke:0.1px #484b7d;">Container images</div>
<div class="t" style="left:400.30px;top:799px;font-size:12px;color:#484b7d;letter-spacing:-0.02px;-webkit-text-stroke:0.1px #484b7d;">Vulnerable components</div>
<div class="t" style="left:68.00px;top:821px;font-size:11.3px;color:#b3122d;letter-spacing:-0.33px;-webkit-text-stroke:0.1px #b3122d;">CRITICAL</div>
<div class="t" style="left:158.60px;top:821px;font-size:11.8px;color:#33356a;letter-spacing:0.0px;-webkit-text-stroke:0;">CVE-2021-46848</div>
<div class="t" style="right:1210.70px;top:821px;font-size:11.8px;color:#33356a;-webkit-text-stroke:0;">5</div>
<div class="t" style="left:68.00px;top:842px;font-size:11.3px;color:#b3122d;letter-spacing:-0.33px;-webkit-text-stroke:0.1px #b3122d;">CRITICAL</div>
<div class="t" style="left:158.60px;top:842px;font-size:11.8px;color:#33356a;letter-spacing:0.0px;-webkit-text-stroke:0;">CVE-2023-25775</div>
<div class="t" style="right:1210.70px;top:842px;font-size:11.8px;color:#33356a;-webkit-text-stroke:0;">4</div>
<div class="t" style="left:68.00px;top:862px;font-size:11.3px;color:#b3122d;letter-spacing:-0.33px;-webkit-text-stroke:0.1px #b3122d;">CRITICAL</div>
<div class="t" style="left:158.60px;top:862px;font-size:11.8px;color:#33356a;letter-spacing:0.0px;-webkit-text-stroke:0;">CVE-2024-32002</div>
<div class="t" style="right:1210.70px;top:862px;font-size:11.8px;color:#33356a;-webkit-text-stroke:0;">4</div>
<div class="t" style="left:68.00px;top:883px;font-size:11.3px;color:#b3122d;letter-spacing:-0.33px;-webkit-text-stroke:0.1px #b3122d;">CRITICAL</div>
<div class="t" style="left:158.60px;top:883px;font-size:11.8px;color:#33356a;letter-spacing:0.0px;-webkit-text-stroke:0;">CVE-2022-1586</div>
<div class="t" style="right:1210.70px;top:883px;font-size:11.8px;color:#33356a;-webkit-text-stroke:0;">4</div>
<svg style="left:0;top:0" width="1600" height="900"><path d="M123.39999999999999 804.6 L126.19999999999999 801.2 L129.0 804.6Z M123.39999999999999 807 L126.19999999999999 810.4 L129.0 807Z" fill="#484b7d"/><path d="M136.6 803.6 L139.85 806.8 L143.1 803.6" fill="none" stroke="#484b7d" stroke-width="1.4" stroke-linecap="round" stroke-linejoin="round"/><path d="M231.69999999999996 804.6 L234.49999999999997 801.2 L237.29999999999998 804.6Z M231.69999999999996 807 L234.49999999999997 810.4 L237.29999999999998 807Z" fill="#484b7d"/><path d="M244.89999999999998 803.6 L248.14999999999998 806.8 L251.39999999999998 803.6" fill="none" stroke="#484b7d" stroke-width="1.4" stroke-linecap="round" stroke-linejoin="round"/><path d="M364.8 804.6 L367.6 801.2 L370.40000000000003 804.6Z M364.8 807 L367.6 810.4 L370.40000000000003 807Z" fill="#484b7d"/><path d="M378.0 803.6 L381.25 806.8 L384.5 803.6" fill="none" stroke="#484b7d" stroke-width="1.4" stroke-linecap="round" stroke-linejoin="round"/><path d="M530.9000000000001 804.6 L533.7 801.2 L536.5 804.6Z M530.9000000000001 807 L533.7 810.4 L536.5 807Z" fill="#484b7d"/><path d="M153.5 799.3 V811.3" stroke="#d3d4e2" stroke-width="0.9"/><path d="M153.5 820.4 V833.0" stroke="#d3d4e2" stroke-width="0.9"/><path d="M153.5 841.1 V853.7" stroke="#d3d4e2" stroke-width="0.9"/><path d="M153.5 861.8 V874.4" stroke="#d3d4e2" stroke-width="0.9"/><path d="M153.5 882.5 V895.1" stroke="#d3d4e2" stroke-width="0.9"/><path d="M261.6 799.3 V811.3" stroke="#d3d4e2" stroke-width="0.9"/><path d="M261.6 820.4 V833.0" stroke="#d3d4e2" stroke-width="0.9"/><path d="M261.6 841.1 V853.7" stroke="#d3d4e2" stroke-width="0.9"/><path d="M261.6 861.8 V874.4" stroke="#d3d4e2" stroke-width="0.9"/><path d="M261.6 882.5 V895.1" stroke="#d3d4e2" stroke-width="0.9"/><path d="M395.4 799.3 V811.3" stroke="#d3d4e2" stroke-width="0.9"/><path d="M395.4 820.4 V833.0" stroke="#d3d4e2" stroke-width="0.9"/><path d="M395.4 841.1 V853.7" stroke="#d3d4e2" stroke-width="0.9"/><path d="M395.4 861.8 V874.4" stroke="#d3d4e2" stroke-width="0.9"/><path d="M395.4 882.5 V895.1" stroke="#d3d4e2" stroke-width="0.9"/><rect x="548.0" y="799.6" width="5.1" height="100" rx="2.5" fill="#c8cadb"/></svg></div>
<div class="abs" style="left:568.3px;top:793.5px;width:497px;height:120px;border-radius:12px;background:#f5f5fa;border:1.6px solid #fbfbfd"></div>
<div class="abs" style="left:0;top:0;width:1600px;height:886.2px;overflow:hidden"><svg style="left:0;top:0" width="1600" height="900"><clipPath id="tc1"><rect x="569.6999999999999" y="794.6" width="481.3" height="100" rx="10"/></clipPath><g clip-path="url(#tc1)"><rect x="569.6999999999999" y="794.6" width="481.3" height="21" fill="#f9f9fc"/><rect x="569.6999999999999" y="816.7" width="481.3" height="20.8" fill="#fcfcfd"/><rect x="569.6999999999999" y="836.5" width="481.3" height="1.1" fill="#e0e1ec"/><rect x="569.6999999999999" y="837.5" width="481.3" height="20.6" fill="#f5f5f9"/><rect x="569.6999999999999" y="857.1" width="481.3" height="1.1" fill="#e0e1ec"/><rect x="569.6999999999999" y="858.1" width="481.3" height="20.8" fill="#fcfcfd"/><rect x="569.6999999999999" y="877.9" width="481.3" height="1.1" fill="#e0e1ec"/><rect x="569.6999999999999" y="878.9" width="481.3" height="20.7" fill="#f5f5f9"/><rect x="569.6999999999999" y="898.6" width="481.3" height="1.1" fill="#e0e1ec"/><rect x="569.6999999999999" y="815.1" width="481.3" height="1.7" fill="#d9dae7"/></g></svg><div class="t" style="left:575.00px;top:799px;font-size:12px;color:#484b7d;letter-spacing:-0.17px;-webkit-text-stroke:0.1px #484b7d;">Risk level</div>
<div class="t" style="left:665.60px;top:799px;font-size:12px;color:#484b7d;letter-spacing:0.2px;-webkit-text-stroke:0.1px #484b7d;">Vulnerability</div>
<div class="t" style="left:773.80px;top:799px;font-size:12px;color:#484b7d;letter-spacing:-0.12px;-webkit-text-stroke:0.1px #484b7d;">Container images</div>
<div class="t" style="left:907.30px;top:799px;font-size:12px;color:#484b7d;letter-spacing:-0.02px;-webkit-text-stroke:0.1px #484b7d;">Vulnerable components</div>
<div class="t" style="left:575.00px;top:821px;font-size:11.3px;color:#b3122d;letter-spacing:-0.33px;-webkit-text-stroke:0.1px #b3122d;">CRITICAL</div>
<div class="t" style="left:665.60px;top:821px;font-size:11.8px;color:#33356a;letter-spacing:0.0px;-webkit-text-stroke:0;">CVE-2021-46848</div>
<div class="t" style="right:703.70px;top:821px;font-size:11.8px;color:#33356a;-webkit-text-stroke:0;">2</div>
<div class="t" style="left:575.00px;top:842px;font-size:11.3px;color:#b3122d;letter-spacing:-0.33px;-webkit-text-stroke:0.1px #b3122d;">CRITICAL</div>
<div class="t" style="left:665.60px;top:842px;font-size:11.8px;color:#33356a;letter-spacing:0.0px;-webkit-text-stroke:0;">CVE-2022-37434</div>
<div class="t" style="right:703.70px;top:842px;font-size:11.8px;color:#33356a;-webkit-text-stroke:0;">2</div>
<div class="t" style="left:575.00px;top:862px;font-size:11.3px;color:#b3122d;letter-spacing:-0.33px;-webkit-text-stroke:0.1px #b3122d;">CRITICAL</div>
<div class="t" style="left:665.60px;top:862px;font-size:11.8px;color:#33356a;letter-spacing:0.0px;-webkit-text-stroke:0;">CVE-2021-22945</div>
<div class="t" style="right:703.70px;top:862px;font-size:11.8px;color:#33356a;-webkit-text-stroke:0;">1</div>
<div class="t" style="left:575.00px;top:883px;font-size:11.3px;color:#b3122d;letter-spacing:-0.33px;-webkit-text-stroke:0.1px #b3122d;">CRITICAL</div>
<div class="t" style="left:665.60px;top:883px;font-size:11.8px;color:#33356a;letter-spacing:0.0px;-webkit-text-stroke:0;">CVE-2021-33574</div>
<div class="t" style="right:703.70px;top:883px;font-size:11.8px;color:#33356a;-webkit-text-stroke:0;">1</div>
<svg style="left:0;top:0" width="1600" height="900"><path d="M630.4000000000001 804.6 L633.2 801.2 L636.0 804.6Z M630.4000000000001 807 L633.2 810.4 L636.0 807Z" fill="#484b7d"/><path d="M643.6 803.6 L646.85 806.8 L650.1 803.6" fill="none" stroke="#484b7d" stroke-width="1.4" stroke-linecap="round" stroke-linejoin="round"/><path d="M738.7 804.6 L741.5 801.2 L744.3 804.6Z M738.7 807 L741.5 810.4 L744.3 807Z" fill="#484b7d"/><path d="M751.9 803.6 L755.15 806.8 L758.4 803.6" fill="none" stroke="#484b7d" stroke-width="1.4" stroke-linecap="round" stroke-linejoin="round"/><path d="M871.8000000000001 804.6 L874.6 801.2 L877.4 804.6Z M871.8000000000001 807 L874.6 810.4 L877.4 807Z" fill="#484b7d"/><path d="M885.0 803.6 L888.25 806.8 L891.5 803.6" fill="none" stroke="#484b7d" stroke-width="1.4" stroke-linecap="round" stroke-linejoin="round"/><path d="M1037.8999999999999 804.6 L1040.6999999999998 801.2 L1043.4999999999998 804.6Z M1037.8999999999999 807 L1040.6999999999998 810.4 L1043.4999999999998 807Z" fill="#484b7d"/><path d="M660.5 799.3 V811.3" stroke="#d3d4e2" stroke-width="0.9"/><path d="M660.5 820.4 V833.0" stroke="#d3d4e2" stroke-width="0.9"/><path d="M660.5 841.1 V853.7" stroke="#d3d4e2" stroke-width="0.9"/><path d="M660.5 861.8 V874.4" stroke="#d3d4e2" stroke-width="0.9"/><path d="M660.5 882.5 V895.1" stroke="#d3d4e2" stroke-width="0.9"/><path d="M768.6 799.3 V811.3" stroke="#d3d4e2" stroke-width="0.9"/><path d="M768.6 820.4 V833.0" stroke="#d3d4e2" stroke-width="0.9"/><path d="M768.6 841.1 V853.7" stroke="#d3d4e2" stroke-width="0.9"/><path d="M768.6 861.8 V874.4" stroke="#d3d4e2" stroke-width="0.9"/><path d="M768.6 882.5 V895.1" stroke="#d3d4e2" stroke-width="0.9"/><path d="M902.4 799.3 V811.3" stroke="#d3d4e2" stroke-width="0.9"/><path d="M902.4 820.4 V833.0" stroke="#d3d4e2" stroke-width="0.9"/><path d="M902.4 841.1 V853.7" stroke="#d3d4e2" stroke-width="0.9"/><path d="M902.4 861.8 V874.4" stroke="#d3d4e2" stroke-width="0.9"/><path d="M902.4 882.5 V895.1" stroke="#d3d4e2" stroke-width="0.9"/><rect x="1055.0" y="799.6" width="5.1" height="100" rx="2.5" fill="#c8cadb"/></svg></div>
<div class="abs" style="left:1075.3px;top:793.5px;width:497.5px;height:120px;border-radius:12px;background:#f5f5fa;border:1.6px solid #fbfbfd"></div>
<div class="abs" style="left:0;top:0;width:1600px;height:886.2px;overflow:hidden"><svg style="left:0;top:0" width="1600" height="900"><clipPath id="tc2"><rect x="1076.7" y="794.6" width="481.8" height="100" rx="10"/></clipPath><g clip-path="url(#tc2)"><rect x="1076.7" y="794.6" width="481.8" height="21" fill="#f9f9fc"/><rect x="1076.7" y="816.7" width="481.8" height="20.8" fill="#fcfcfd"/><rect x="1076.7" y="836.5" width="481.8" height="1.1" fill="#e0e1ec"/><rect x="1076.7" y="837.5" width="481.8" height="20.6" fill="#f5f5f9"/><rect x="1076.7" y="857.1" width="481.8" height="1.1" fill="#e0e1ec"/><rect x="1076.7" y="858.1" width="481.8" height="20.8" fill="#fcfcfd"/><rect x="1076.7" y="877.9" width="481.8" height="1.1" fill="#e0e1ec"/><rect x="1076.7" y="878.9" width="481.8" height="20.7" fill="#f5f5f9"/><rect x="1076.7" y="898.6" width="481.8" height="1.1" fill="#e0e1ec"/><rect x="1076.7" y="815.1" width="481.8" height="1.7" fill="#d9dae7"/></g></svg><div class="t" style="left:1082.00px;top:799px;font-size:12px;color:#484b7d;letter-spacing:-0.17px;-webkit-text-stroke:0.1px #484b7d;">Risk level</div>
<div class="t" style="left:1178.80px;top:799px;font-size:12px;color:#484b7d;letter-spacing:0.2px;-webkit-text-stroke:0.1px #484b7d;">Vulnerability</div>
<div class="t" style="left:1287.00px;top:799px;font-size:12px;color:#484b7d;letter-spacing:-0.12px;-webkit-text-stroke:0.1px #484b7d;">Container images</div>
<div class="t" style="left:1420.50px;top:799px;font-size:12px;color:#484b7d;letter-spacing:-0.02px;-webkit-text-stroke:0.1px #484b7d;">Vulnerable components</div>
<div class="t" style="left:1082.00px;top:821px;font-size:11.3px;color:#d63b4b;letter-spacing:-0.33px;-webkit-text-stroke:0.1px #d63b4b;">HIGH</div>
<div class="t" style="left:1178.80px;top:821px;font-size:11.8px;color:#33356a;letter-spacing:0.0px;-webkit-text-stroke:0;">CVE-2023-5363</div>
<div class="t" style="right:190.70px;top:821px;font-size:11.8px;color:#33356a;-webkit-text-stroke:0;">2</div>
<div class="t" style="left:1082.00px;top:842px;font-size:11.3px;color:#c2660a;letter-spacing:-0.33px;-webkit-text-stroke:0.1px #c2660a;">MEDIUM</div>
<div class="t" style="left:1178.80px;top:842px;font-size:11.8px;color:#33356a;letter-spacing:0.0px;-webkit-text-stroke:0;">CVE-2023-42363</div>
<div class="t" style="right:190.70px;top:842px;font-size:11.8px;color:#33356a;-webkit-text-stroke:0;">2</div>
<div class="t" style="left:1082.00px;top:862px;font-size:11.3px;color:#c2660a;letter-spacing:-0.33px;-webkit-text-stroke:0.1px #c2660a;">MEDIUM</div>
<div class="t" style="left:1178.80px;top:862px;font-size:11.8px;color:#33356a;letter-spacing:0.0px;-webkit-text-stroke:0;">CVE-2023-42364</div>
<div class="t" style="right:190.70px;top:862px;font-size:11.8px;color:#33356a;-webkit-text-stroke:0;">2</div>
<div class="t" style="left:1082.00px;top:883px;font-size:11.3px;color:#c2660a;letter-spacing:-0.33px;-webkit-text-stroke:0.1px #c2660a;">MEDIUM</div>
<div class="t" style="left:1178.80px;top:883px;font-size:11.8px;color:#33356a;letter-spacing:0.0px;-webkit-text-stroke:0;">CVE-2023-42365</div>
<div class="t" style="right:190.70px;top:883px;font-size:11.8px;color:#33356a;-webkit-text-stroke:0;">2</div>
<svg style="left:0;top:0" width="1600" height="900"><path d="M1137.3999999999999 804.6 L1140.1999999999998 801.2 L1142.9999999999998 804.6Z M1137.3999999999999 807 L1140.1999999999998 810.4 L1142.9999999999998 807Z" fill="#484b7d"/><path d="M1150.6 803.6 L1153.85 806.8 L1157.1 803.6" fill="none" stroke="#484b7d" stroke-width="1.4" stroke-linecap="round" stroke-linejoin="round"/><path d="M1251.8999999999999 804.6 L1254.6999999999998 801.2 L1257.4999999999998 804.6Z M1251.8999999999999 807 L1254.6999999999998 810.4 L1257.4999999999998 807Z" fill="#484b7d"/><path d="M1265.1 803.6 L1268.35 806.8 L1271.6 803.6" fill="none" stroke="#484b7d" stroke-width="1.4" stroke-linecap="round" stroke-linejoin="round"/><path d="M1385.0 804.6 L1387.8 801.2 L1390.6 804.6Z M1385.0 807 L1387.8 810.4 L1390.6 807Z" fill="#484b7d"/><path d="M1398.2 803.6 L1401.45 806.8 L1404.7 803.6" fill="none" stroke="#484b7d" stroke-width="1.4" stroke-linecap="round" stroke-linejoin="round"/><path d="M1551.1 804.6 L1553.8999999999999 801.2 L1556.6999999999998 804.6Z M1551.1 807 L1553.8999999999999 810.4 L1556.6999999999998 807Z" fill="#484b7d"/><path d="M1173.7 799.3 V811.3" stroke="#d3d4e2" stroke-width="0.9"/><path d="M1173.7 820.4 V833.0" stroke="#d3d4e2" stroke-width="0.9"/><path d="M1173.7 841.1 V853.7" stroke="#d3d4e2" stroke-width="0.9"/><path d="M1173.7 861.8 V874.4" stroke="#d3d4e2" stroke-width="0.9"/><path d="M1173.7 882.5 V895.1" stroke="#d3d4e2" stroke-width="0.9"/><path d="M1281.7 799.3 V811.3" stroke="#d3d4e2" stroke-width="0.9"/><path d="M1281.7 820.4 V833.0" stroke="#d3d4e2" stroke-width="0.9"/><path d="M1281.7 841.1 V853.7" stroke="#d3d4e2" stroke-width="0.9"/><path d="M1281.7 861.8 V874.4" stroke="#d3d4e2" stroke-width="0.9"/><path d="M1281.7 882.5 V895.1" stroke="#d3d4e2" stroke-width="0.9"/><path d="M1415.4 799.3 V811.3" stroke="#d3d4e2" stroke-width="0.9"/><path d="M1415.4 820.4 V833.0" stroke="#d3d4e2" stroke-width="0.9"/><path d="M1415.4 841.1 V853.7" stroke="#d3d4e2" stroke-width="0.9"/><path d="M1415.4 861.8 V874.4" stroke="#d3d4e2" stroke-width="0.9"/><path d="M1415.4 882.5 V895.1" stroke="#d3d4e2" stroke-width="0.9"/><rect x="1562.5" y="799.6" width="5.1" height="100" rx="2.5" fill="#c8cadb"/></svg></div>
<!-- page scrollbar -->
<div class="abs" style="left:1591px;top:296px;width:5px;height:365px;border-radius:3px;background:#cfd1e0"></div>
<!-- viewport clip at bottom -->
<div class="abs" style="left:47px;top:886.3px;width:1553px;height:14px;background:#f3f3f8"></div>

</div>
</body>
</html>
